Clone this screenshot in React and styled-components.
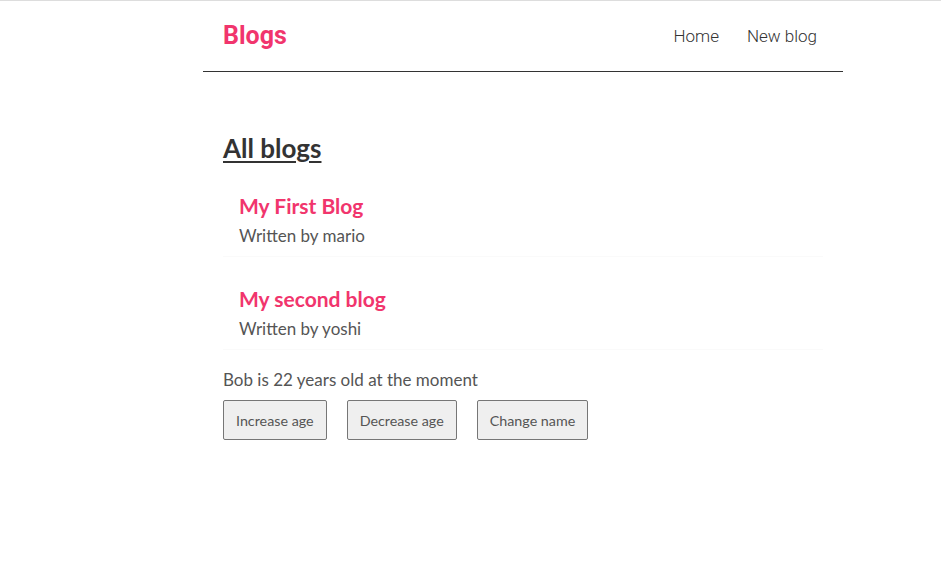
import styled, { createGlobalStyle } from "styled-components"

const GlobalStyle = createGlobalStyle`
	* {
		margin: 0;
		box-sizing: border-box;
	}
	body {
		margin: 0;
		border-top: 1px solid #dddddd;
		background: #ffffff;
		color: #333333;
		font-family: "Lato", "Noto Sans", sans-serif;
	}
`

const Page = styled.div`
	width: 640px;
	margin-left: 203px;
`

const Navbar = styled.nav`
	display: flex;
	align-items: center;
	padding: 20px;
	border-bottom: 1px solid #333333;
`

const Brand = styled.h1`
	font-family: "Roboto", sans-serif;
	font-size: 25px;
	line-height: 30px;
	font-weight: 700;
	color: #f1356d;
`

const Links = styled.div`
	margin-left: auto;
	display: flex;
`

const NavLink = styled.a`
	margin-left: 16px;
	padding: 0 6px;
	font-family: "Roboto", sans-serif;
	font-size: 17px;
	font-weight: 300;
	color: #333333;
	text-decoration: none;
`

const Content = styled.main`
	margin-top: 40px;
	padding: 20px;
`

const PageTitle = styled.h2`
	font-size: 26px;
	line-height: 32px;
	font-weight: 700;
	color: #333333;
	text-decoration: underline;
	text-underline-offset: 3px;
	text-decoration-thickness: 2px;
`

const Preview = styled.div`
	padding: 10px 16px;
	margin: 20px 0;
	border-bottom: 1px solid #fafafa;
`

const PreviewTitle = styled.h2`
	font-size: 21px;
	line-height: 24px;
	font-weight: 700;
	color: #f1356d;
	margin-bottom: 8px;
`

const Text = styled.p`
	font-size: 17px;
	line-height: 20px;
	font-weight: 400;
	color: #555555;
`

const Buttons = styled.div`
	display: flex;
	gap: 20px;
	margin-top: 10px;
`

const Button = styled.button`
	height: 40px;
	padding: 0 12px;
	font-family: "Lato", sans-serif;
	font-size: 14.3px;
	color: #555555;
	background: #efefef;
	border: 1px solid #767676;
	border-radius: 2px;
`

const blogs = [
	{ id: 1, title: "My First Blog", author: "mario" },
	{ id: 2, title: "My second blog", author: "yoshi" },
]

function App() {
	return (
		<>
			<GlobalStyle />
			<Page>
				<Navbar>
					<Brand>Blogs</Brand>
					<Links>
						<NavLink href="#">Home</NavLink>
						<NavLink href="#">New blog</NavLink>
					</Links>
				</Navbar>
				<Content>
					<PageTitle>All blogs</PageTitle>
					{blogs.map((blog) => (
						<Preview key={blog.id}>
							<PreviewTitle>{blog.title}</PreviewTitle>
							<Text>Written by {blog.author}</Text>
						</Preview>
					))}
					<Text>Bob is 22 years old at the moment</Text>
					<Buttons>
						<Button>Increase age</Button>
						<Button>Decrease age</Button>
						<Button>Change name</Button>
					</Buttons>
				</Content>
			</Page>
		</>
	)
}

export default App
